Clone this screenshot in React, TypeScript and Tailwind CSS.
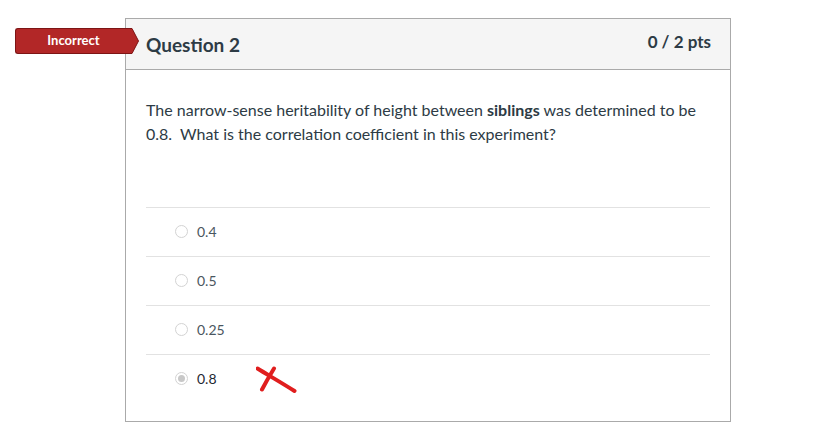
const answers = [
  { label: '0.4', selected: false },
  { label: '0.5', selected: false },
  { label: '0.25', selected: false },
  { label: '0.8', selected: true },
];

const Radio = ({ selected }: { selected: boolean }) => (
  <span className="flex h-[13px] w-[13px] items-center justify-center rounded-full border border-[#d3d3d3] bg-white">
    {selected && <span className="h-[7px] w-[7px] rounded-full bg-[#c8c8c8]" />}
  </span>
);

export default function App() {
  return (
    <div className="h-[442px] w-[815px] bg-white font-['Lato','Liberation_Sans',sans-serif] text-[#2d3b45]">
      <div className="relative ml-[125px] pt-[18px]">
        {/* Incorrect badge */}
        <div className="absolute left-[-110px] top-[28px] flex h-[26px] items-center">
          <div className="flex h-[26px] w-[116px] items-center justify-center rounded-l-[3px] border border-r-0 border-[#7d1515] bg-[#b22727] text-[13px] font-bold text-white">
            Incorrect
          </div>
          <svg width="8" height="26" viewBox="0 0 8 26" className="block">
            <path d="M0 0.5 L1 0.5 L7.5 13 L1 25.5 L0 25.5 Z" fill="#b22727" stroke="#7d1515" strokeWidth="1" />
            <rect x="0" y="1" width="1.2" height="24" fill="#b22727" />
          </svg>
        </div>

        <div className="w-[606px] border border-[#aaaaaa]">
          <div className="flex h-[51px] items-center justify-between border-b border-[#aaaaaa] bg-[#f5f5f5] pl-[20px] pr-[19px]">
            <span className="text-[19px] font-bold leading-none">Question 2</span>
            <span className="mb-[6px] text-[17px] font-bold leading-none">0 / 2 pts</span>
          </div>

          <div className="px-[20px] pb-[18px] pt-[28px]">
            <p className="text-[16px] leading-[24px]">
              The narrow-sense heritability of height between <strong>siblings</strong> was determined to be 0.8.&nbsp; What is the correlation coefficient in this experiment?
            </p>

            <div className="mt-[61px]">
              {answers.map((a) => (
                <div key={a.label} className="relative flex h-[49px] items-center border-t border-[#e2e2e2] pb-[2px] pl-[29px]">
                  <Radio selected={a.selected} />
                  <span className={`ml-[9px] text-[14px] ${a.selected ? 'text-[#1f2a33]' : 'text-[#4a5660]'}`}>{a.label}</span>
                  {a.selected && (
                    <svg className="absolute left-[110px] top-[11px]" width="42" height="30" viewBox="0 0 42 30">
                      <path d="M1.5 2.5 C12 9 26 17 38.5 25" stroke="#e01e1e" strokeWidth="4" strokeLinecap="round" fill="none" />
                      <path d="M18 2.5 C14 9 10 16 6 23.5" stroke="#e01e1e" strokeWidth="4" strokeLinecap="round" fill="none" />
                    </svg>
                  )}
                </div>
              ))}
            </div>
          </div>
        </div>
      </div>
    </div>
  );
}
